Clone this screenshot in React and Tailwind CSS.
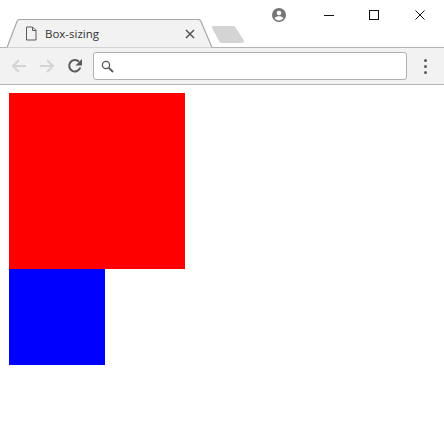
function FileIcon() {
  return (
    <svg width="11" height="15" viewBox="0 0 11 15" fill="none" stroke="#5a5a5a" strokeWidth="1">
      <path d="M.5 1h6l3.500 3.500V14H.5z" />
      <path d="M6.500 1v3.500H10" />
    </svg>
  );
}

function Tab() {
  return (
    <div className="relative w-[206px] h-[29px] -mb-px shrink-0 flex items-center pl-[19px] pr-[18px]">
      {/* tab outline */}
      <svg className="absolute left-0 top-0" width="206" height="29" viewBox="0 0 206 29">
        <path
          d="M0 28.500L10 2.500c.5-1.300 1.500-2 3-2h178c1.500 0 2.500.7 3 2l11 26"
          fill="#f2f2f2"
          stroke="#a8a8a8"
          strokeWidth="1.200"
        />
      </svg>
      <div className="relative flex items-center w-full">
        <FileIcon />
        <span className="ml-[8px] text-[11.5px] leading-none text-[#333] font-['Open_Sans',sans-serif]">Box-sizing</span>
        <svg className="ml-auto" width="10" height="10" viewBox="0 0 10 10" stroke="#555" strokeWidth="1.500">
          <path d="M1 1l8 8M9 1l-8 8" />
        </svg>
      </div>
    </div>
  );
}

function WindowControls() {
  return (
    <div className="flex items-center pt-[8px]">
      <svg width="14" height="14" viewBox="0 0 24 24" fill="#757575" className="mr-[38px]">
        <path d="M12 0a12 12 0 1 0 0 24a12 12 0 0 0 0-24zm0 4.500a4 4 0 1 1 0 8a4 4 0 0 1 0-8zm0 17c-3.300 0-6.200-1.700-7.800-4.200c1.600-2 5.200-3.100 7.800-3.100s6.200 1.100 7.800 3.100c-1.600 2.500-4.500 4.200-7.800 4.200z" />
      </svg>
      <svg width="10" height="10" viewBox="0 0 10 10" fill="none" stroke="#111" className="mr-[35px]">
        <path d="M0 5.500h10" />
      </svg>
      <svg width="10" height="10" viewBox="0 0 10 10" fill="none" stroke="#111" strokeWidth="1.100" className="mr-[36px]">
        <path d="M.5.500h9v9h-9z" />
      </svg>
      <svg width="10" height="10" viewBox="0 0 10 10" fill="none" stroke="#111" className="mr-[19px]">
        <path d="M.5.500l9 9M9.500.500l-9 9" />
      </svg>
    </div>
  );
}

function Toolbar() {
  return (
    <div className="h-[37px] bg-[#f2f2f2] border-b border-[#b4b4b4] flex items-center">
      <svg width="16" height="14" viewBox="0 0 16 14" fill="none" stroke="#d4d4d4" strokeWidth="2" className="ml-[11px]">
        <path d="M15 7H2M8 1L2 7l6 6" />
      </svg>
      <svg width="16" height="14" viewBox="0 0 16 14" fill="none" stroke="#d4d4d4" strokeWidth="2" className="ml-[12px]">
        <path d="M1 7h13M8 1l6 6-6 6" />
      </svg>
      <svg width="16" height="16" viewBox="0 0 16 16" className="ml-[12px]">
        <path d="M13.300 9.500A5.700 5.700 0 1 1 12 3.800" fill="none" stroke="#5a5a5a" strokeWidth="2" />
        <path d="M15 1v6.500H8.500z" fill="#5a5a5a" />
      </svg>
      <div className="ml-[10px] w-[314px] h-[28px] bg-white border border-[#b0b0b0] rounded-[3px] flex items-center pl-[7px]">
        <svg width="13" height="13" viewBox="0 0 13 13" fill="none" stroke="#555">
          <circle cx="5" cy="5" r="3.600" strokeWidth="1.300" />
          <path d="M7.800 7.800l4.200 4.200" strokeWidth="1.800" />
        </svg>
      </div>
      <div className="ml-[17px] flex flex-col gap-[3px]">
        <div className="w-[3px] h-[3px] rounded-full bg-[#5a5a5a]" />
        <div className="w-[3px] h-[3px] rounded-full bg-[#5a5a5a]" />
        <div className="w-[3px] h-[3px] rounded-full bg-[#5a5a5a]" />
      </div>
    </div>
  );
}

export default function App() {
  return (
    <div className="w-[444px] h-[438px] bg-white overflow-hidden">
      {/* title bar */}
      <div className="h-[48px] border-b border-[#b4b4b4] flex items-end justify-between">
        <div className="flex items-end pl-[7px]">
          <Tab />
          <svg width="36" height="19" viewBox="0 0 36 19" className="-ml-[3px] mb-[3px]">
            <path d="M4 1h19c1.500 0 2.500.7 3 2l7.500 12c1 2 0 3-2 3H12c-1.500 0-2.500-.7-3-2L2 3C1.500 1.700 2.500 1 4 1z" fill="#d4d4d4" />
          </svg>
        </div>
        <div className="self-start">
          <WindowControls />
        </div>
      </div>
      <Toolbar />
      {/* page */}
      <div className="pt-[8px] pl-[9px]">
        <div className="w-[176px] h-[176px] bg-[#ff0000]" />
        <div className="w-[96px] h-[96px] bg-[#0000ff]" />
      </div>
    </div>
  );
}
